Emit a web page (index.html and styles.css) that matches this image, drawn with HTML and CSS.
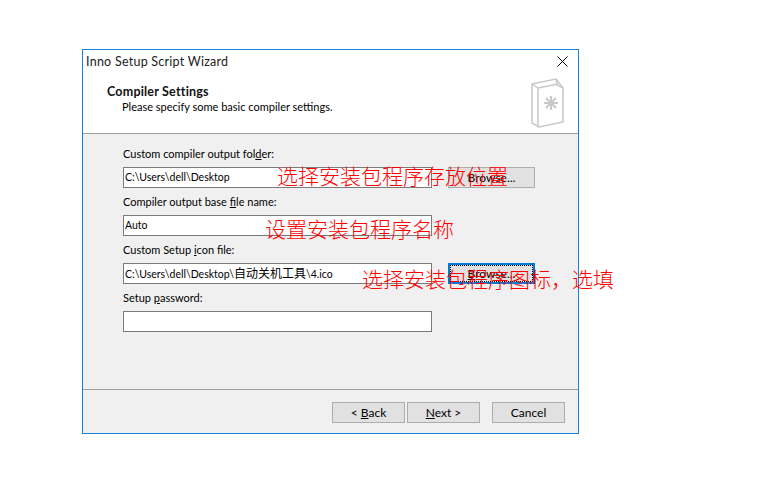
FILE: index.html
```html
<!DOCTYPE html>
<html lang="zh-CN">
<head>
<meta charset="utf-8">
<title>Inno Setup Script Wizard</title>
<link rel="stylesheet" href="styles.css">
</head>
<body>
<div class="window">
  <div class="head">
    <div class="titlebar">
      <span class="title">Inno Setup Script Wizard</span>
      <svg class="close" width="11" height="11" viewBox="0 0 11 11"><path d="M.5.5l10 10M10.5.5l-10 10" stroke="#000" fill="none"/></svg>
    </div>
    <div class="banner">
      <div class="banner-text">
        <div class="heading">Compiler Settings</div>
        <div class="sub">Please specify some basic compiler settings.</div>
      </div>
      <svg class="doc" width="33" height="50" viewBox="0 0 33 50">
        <g fill="none" stroke="#c8c8c8" stroke-width="1.5">
          <path d="M1 6 L25 1 L32 10 V44 L8 49 L1 45 Z"/>
          <path d="M1 6 L7 10 L27 6 M7 10 V48 M25 1 L26 7 L32 10"/>
        </g>
        <path d="M20 18v14M13 25h14M15 20l10 10M25 20l-10 10" stroke="#c8c8c8" stroke-width="2" fill="none"/>
      </svg>
    </div>
  </div>
  <div class="content">
    <div class="field">
      <label>Custom compiler output fol<u>d</u>er:</label>
      <div class="row">
        <div class="input">C:\Users\dell\Desktop</div>
        <button class="btn browse">Browse...</button>
      </div>
    </div>
    <div class="field">
      <label>Compiler output base <u>f</u>ile name:</label>
      <div class="row"><div class="input">Auto</div></div>
    </div>
    <div class="field">
      <label>Custom Setup <u>i</u>con file:</label>
      <div class="row">
        <div class="input">C:\Users\dell\Desktop\<span class="cjk">自动关机工具</span>\4.ico</div>
        <button class="btn browse focused"><span class="focus-ring"><u>B</u>rowse...</span></button>
      </div>
    </div>
    <div class="field">
      <label>Setup <u>p</u>assword:</label>
      <div class="row"><div class="input"></div></div>
    </div>
  </div>
  <div class="footer">
    <button class="btn nav">&lt; <u>B</u>ack</button>
    <button class="btn nav"><u>N</u>ext &gt;</button>
    <button class="btn nav cancel">Cancel</button>
  </div>
</div>
<div class="note note-1">选择安装包程序存放位置</div>
<div class="note note-2">设置安装包程序名称</div>
<div class="note note-3">选择安装包程序图标，选填</div>
</body>
</html>
```
FILE: styles.css
```css
* { box-sizing: border-box; }
html, body { margin: 0; padding: 0; background: #fff; }
body {
  width: 764px; height: 487px; position: relative; overflow: hidden;
  padding: 49px 0 0 82px;
  font-family: Lato, "Noto Sans CJK SC", sans-serif;
  font-size: 11px; color: #000;
}
.window {
  width: 497px; height: 385px;
  border: 1px solid #1883d7;
  background: #f0f0f0;
  display: flex; flex-direction: column;
}
.head { height: 84px; background: #fff; border-bottom: 1px solid #a0a0a0; flex: none; }
.titlebar { height: 23px; display: flex; align-items: center; justify-content: space-between; padding: 0 10px 0 3px; }
.title { font-size: 12.5px; letter-spacing: .25px; color: #222; }
.banner { display: flex; justify-content: space-between; padding: 0 14px 0 24px; }
.banner-text { padding-top: 11px; }
.heading { font-weight: 700; font-size: 12.5px; letter-spacing: .2px; line-height: 15px; color: #111; }
.sub { padding-left: 15px; line-height: 16px; }
.doc { margin-top: 5px; }
.content { flex: 1; padding: 12px 0 0 40px; }
.field { margin-bottom: 6px; }
.field label { display: block; line-height: 16px; height: 16px; margin-bottom: 5px; }
.row { display: flex; align-items: center; gap: 16px; height: 21px; }
.input {
  width: 309px; height: 21px; background: #fff; border: 1px solid #7a7a7a;
  padding: 0 1px; line-height: 18px; font-size: 10.5px; white-space: nowrap;
}
.cjk { font-family: "Noto Sans CJK SC", sans-serif; font-size: 12px; }
.btn {
  font: 12px Lato, sans-serif; color: #000; background: #e1e1e1; border: 1px solid #adadad;
  padding: 0; display: block; height: 21px;
}
.browse { width: 87px; }
.focused { border: 2px solid #0078d7; padding: 0; }
.focus-ring { display: block; height: 17px; line-height: 15px; border: 1px dotted #000; }
.footer {
  height: 44px; flex: none; border-top: 1px solid #a0a0a0;
  display: flex; gap: 2px; padding: 12px 13px 0 249px;
}
.nav { width: 73px; }
.cancel { margin-left: 10px; }
.note {
  position: absolute; color: #f00; font-size: 21px; line-height: 28px; white-space: nowrap;
  font-family: "Noto Sans CJK SC", sans-serif; font-weight: 300;
}
.note-1 { left: 277px; top: 161px; }
.note-2 { left: 265px; top: 214px; }
.note-3 { left: 362px; top: 264px; }
```
